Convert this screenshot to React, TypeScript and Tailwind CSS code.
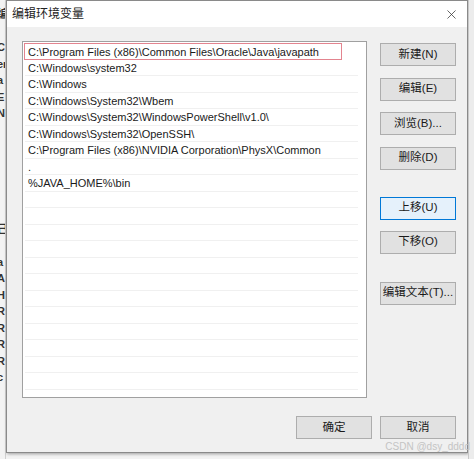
import { X } from 'lucide-react'

const paths = [
  'C:\\Program Files (x86)\\Common Files\\Oracle\\Java\\javapath',
  'C:\\Windows\\system32',
  'C:\\Windows',
  'C:\\Windows\\System32\\Wbem',
  'C:\\Windows\\System32\\WindowsPowerShell\\v1.0\\',
  'C:\\Windows\\System32\\OpenSSH\\',
  'C:\\Program Files (x86)\\NVIDIA Corporation\\PhysX\\Common',
  '.',
  '%JAVA_HOME%\\bin',
]

const font = "font-['Microsoft_YaHei','Liberation_Sans','Noto_Sans_CJK_SC',sans-serif]"

function Btn({ label, active = false }: { label: string; active?: boolean }) {
  return (
    <div
      className={`w-[76px] h-[23px] flex items-center justify-center text-[11.5px] text-[#1a1a1a] border ${
        active ? 'bg-[#e5f1fb] border-[#0078d7]' : 'bg-[#e1e1e1] border-[#adadad]'
      }`}
    >
      {label}
    </div>
  )
}

// fenêtre en arrière-plan, à peine visible sur les bords
const behind = ['编', '', 'C', 'er', 'a', 'E', 'N', '', '', '', '', '', '', '己', '', 'a', 'A', 'H', 'R', 'R', 'R', 'R', 'c']

export default function App() {
  const rows = Array.from({ length: 22 }, (_, i) => paths[i] ?? '')

  return (
    <div className={`relative w-[474px] h-[459px] overflow-hidden bg-[#f3f3f3] flex ${font}`}>
      {/* bord gauche */}
      <div className="w-[6px] shrink-0 flex flex-col overflow-hidden text-[11px] font-bold text-[#333] leading-[16.5px] pt-[6px] border-r border-[#d0d0d0]">
        {behind.map((c, i) => (
          <div key={i} className="h-[16.5px] -ml-[3px] whitespace-nowrap">
            {c}
          </div>
        ))}
      </div>

      {/* dialogue */}
      <div className="w-[462px] h-[453px] shrink-0 flex flex-col bg-[#f0f0f0] border border-[#8a8a8a] shadow-[1px_1px_3px_rgba(0,0,0,0.35)]">
        <div className="h-[26px] bg-white flex items-center justify-between pl-[5px] pr-[8px]">
          <span className="text-[12px] text-[#222]">编辑环境变量</span>
          <X className="size-[15px] text-[#333]" strokeWidth={1.2} />
        </div>

        <div className="flex gap-[13px] pl-[15px] pt-[14px]">
          <div className="w-[345px] h-[357px] bg-white border border-[#a0a0a0] overflow-hidden pt-[1px] px-[1px]">
            {rows.map((p, i) => (
              <div
                key={i}
                className={`h-[16.5px] text-[11px] leading-[16px] whitespace-nowrap text-[#1a1a1a] ${
                  i === 0
                    ? 'w-[318px] border border-[#e3848f] pl-[3px]'
                    : 'border-b border-[#f0f0f0] ml-[1px] mr-[7px] pl-[3px]'
                }`}
              >
                {p}
              </div>
            ))}
          </div>

          <div className="flex flex-col pt-[2px]">
            <div className="flex flex-col gap-[11.5px]">
              <Btn label="新建(N)" />
              <Btn label="编辑(E)" />
              <Btn label="浏览(B)..." />
              <Btn label="删除(D)" />
            </div>
            <div className="flex flex-col gap-[11px] mt-[27px]">
              <Btn label="上移(U)" active />
              <Btn label="下移(O)" />
            </div>
            <div className="mt-[28px]">
              <Btn label="编辑文本(T)..." />
            </div>
          </div>
        </div>

        <div className="flex justify-end gap-[8px] pr-[11px] mt-[18px]">
          <Btn label="确定" />
          <Btn label="取消" />
        </div>
      </div>

      {/* bord droit */}
      <div className="flex-1 border-l border-[#c8c8c8] bg-[#ececec]" />

      <span className="absolute right-[4px] bottom-[5px] text-[10px] text-[#c4c4c4] font-['Liberation_Sans',sans-serif]">
        CSDN @dsy_dddd
      </span>
    </div>
  )
}
